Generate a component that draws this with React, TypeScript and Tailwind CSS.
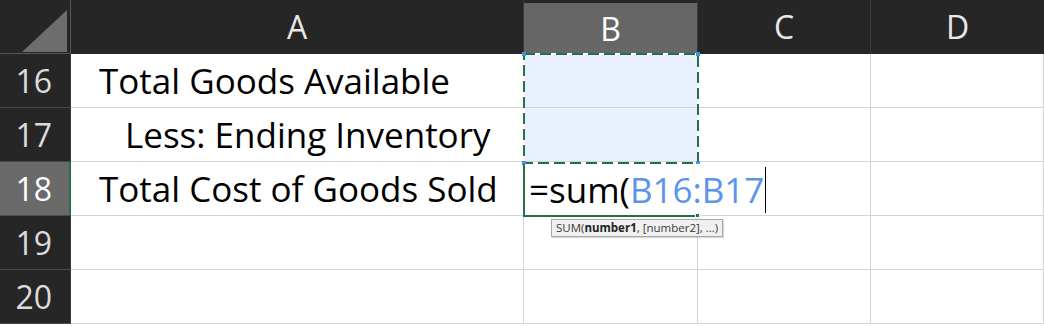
import React from "react";

const font = { fontFamily: "'Open Sans', 'Noto Sans', sans-serif" };

function Corner() {
  return (
    <div className="relative bg-[#262626] border-r border-b border-[#555555]">
      <svg className="absolute left-[22px] top-[10px]" width="46" height="42" viewBox="0 0 46 42">
        <polygon points="45,0 45,42 0,42" fill="#6d6d6d" />
      </svg>
    </div>
  );
}

export default function App() {
  const rows = [
    { n: "16", a: "Total Goods Available", indent: false },
    { n: "17", a: "Less: Ending Inventory", indent: true },
    { n: "18", a: "Total Cost of Goods Sold", indent: false, sel: true },
    { n: "19", a: "", indent: false },
    { n: "20", a: "", indent: false },
  ];
  return (
    <div className="relative w-[1044px] h-[326px] overflow-hidden bg-white" style={font}>
      <div className="grid grid-cols-[71px_453px_174px_173px_173px] grid-rows-[54px_54px_54px_54px_54px_54px] leading-none">
        <Corner />
        <div className="flex items-center justify-center bg-[#262626] border-r border-[#3a3a3a] text-[32px] text-[#e8e8e8]">A</div>
        <div className="flex flex-col bg-[#262626] border-r border-[#3a3a3a]">
          <div className="mt-[3px] flex-1 flex items-center justify-center bg-[#666666] text-[32px] text-white">B</div>
        </div>
        <div className="flex items-center justify-center bg-[#262626] border-r border-[#3a3a3a] text-[32px] text-[#e8e8e8]">C</div>
        <div className="flex items-center justify-center bg-[#262626] text-[32px] text-[#e8e8e8]">D</div>
        {rows.map((r) => (
          <React.Fragment key={r.n}>
            <div
              className={
                r.sel
                  ? "flex items-center justify-end pr-[17px] bg-[#6a6a6a] border-r-2 border-r-[#217346] border-b border-b-[#4a4a4a] text-[32px] text-white"
                  : "flex items-center justify-end pr-[18px] bg-[#262626] border-r border-r-[#3a3a3a] border-b border-b-[#4a4a4a] text-[32px] text-[#dcdcdc]"
              }
            >
              {r.n}
            </div>
            <div
              className={
                r.indent
                  ? "flex items-center pl-[54px] border-r border-b border-[#d4d4d4] text-[35px] text-black"
                  : "flex items-center pl-[28px] border-r border-b border-[#d4d4d4] text-[35px] text-black"
              }
            >
              {r.a}
            </div>
            <div className={r.n === "16" || r.n === "17" ? "bg-[#e9f0fd] border-r border-b border-[#d4d4d4]" : "border-r border-b border-[#d4d4d4]"} />
            <div className="border-r border-b border-[#d4d4d4]" />
            <div className="border-r border-b border-[#d4d4d4]" />
          </React.Fragment>
        ))}
      </div>

      {/* copy range marching ants */}
      <svg className="absolute left-[522px] top-[52px]" width="178" height="113" viewBox="0 0 178 113">
        <rect x="2" y="2" width="174" height="109" fill="none" stroke="#ffffff" strokeWidth="2" />
        <rect x="2" y="2" width="174" height="109" fill="none" stroke="#217346" strokeWidth="2" strokeDasharray="11 5" />
        <rect x="0" y="0" width="4" height="4" fill="#4a90e2" />
        <rect x="174" y="0" width="4" height="4" fill="#4a90e2" />
        <rect x="0" y="109" width="4" height="4" fill="#4a90e2" />
        <rect x="174" y="109" width="4" height="4" fill="#4a90e2" />
      </svg>

      {/* edit cell */}
      <div className="absolute left-[523px] top-[164px] w-[250px] h-[51px] bg-white flex items-center pl-[6px] text-[35px] leading-none text-black">
        <span>=sum(</span>
        <span className="text-[#5b95ea]">B16:B17</span>
        <span className="ml-[1px] w-px h-[46px] bg-black" />
      </div>
      <div className="absolute left-[523px] top-[164px] w-[2px] h-[53px] bg-[#217346]" />
      <div className="absolute left-[523px] top-[215px] w-[175px] h-[2px] bg-[#217346]" />
      <div className="absolute left-[695px] top-[213px] w-[5px] h-[5px] bg-[#217346] border border-white" />

      {/* tooltip */}
      <div className="absolute left-[551px] top-[219px] h-[18px] px-[4px] flex items-center bg-[#f0f0f0] border border-[#a8a8a8] text-[11.5px] leading-none text-[#3a3a3a] shadow-[1px_1px_1px_rgba(0,0,0,0.15)]">
        SUM(<b className="font-bold text-[#222]">number1</b>, [number2], ...)
      </div>
    </div>
  );
}
